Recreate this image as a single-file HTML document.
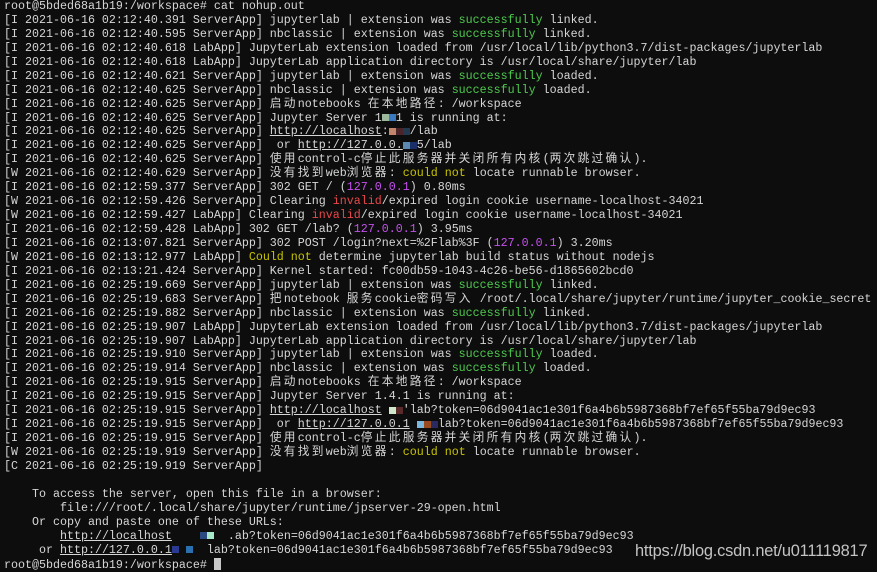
<!DOCTYPE html>
<html><head><meta charset="utf-8"><style>
html,body{margin:0;padding:0;background:#0d0d0d;width:877px;height:572px;overflow:hidden}
pre{margin:0;position:absolute;left:4px;top:0;font-family:"Liberation Mono","Noto Sans CJK SC",monospace;font-size:11.67px;line-height:13.93px;color:#d6d6d6;white-space:pre}
.g{color:#4ec94e}.y{color:#c8c400}.r{color:#e8474a}.m{color:#c451ee}
.u{text-decoration:underline}
.c{font-family:"Noto Sans CJK SC",sans-serif;letter-spacing:2.33px;line-height:0}
.b{display:inline-block;width:7px;height:7px;vertical-align:middle;line-height:0}
.cur{display:inline-block;width:7px;height:12px;background:#c8c8c8;vertical-align:-2px;line-height:0}
.wm{position:absolute;left:635px;top:542px;font-family:"Liberation Sans",sans-serif;font-size:16.4px;color:#c4c4c4;letter-spacing:-0.2px}
</style></head><body><pre>root@5bded68a1b19:/workspace# cat nohup.out
[I 2021-06-16 02:12:40.391 ServerApp] jupyterlab | extension was <span class="g">successfully</span> linked.
[I 2021-06-16 02:12:40.595 ServerApp] nbclassic | extension was <span class="g">successfully</span> linked.
[I 2021-06-16 02:12:40.618 LabApp] JupyterLab extension loaded from /usr/local/lib/python3.7/dist-packages/jupyterlab
[I 2021-06-16 02:12:40.618 LabApp] JupyterLab application directory is /usr/local/share/jupyter/lab
[I 2021-06-16 02:12:40.621 ServerApp] jupyterlab | extension was <span class="g">successfully</span> loaded.
[I 2021-06-16 02:12:40.625 ServerApp] nbclassic | extension was <span class="g">successfully</span> loaded.
[I 2021-06-16 02:12:40.625 ServerApp] <span class="c">启动</span>notebooks <span class="c">在本地路径</span>: /workspace
[I 2021-06-16 02:12:40.625 ServerApp] Jupyter Server 1<span class="b" style="background:#9bb89a"></span><span class="b" style="background:#3a78c0"></span>1 is running at:
[I 2021-06-16 02:12:40.625 ServerApp] <span class="u">http://localhost</span>:<span class="b" style="background:#c4866a"></span><span class="b" style="background:#4a2428"></span><span class="b" style="background:#23394f"></span>/lab
[I 2021-06-16 02:12:40.625 ServerApp]  or <span class="u">http://127.0.0.</span><span class="b" style="background:#5a8ab0"></span><span class="b" style="background:#1a2f6a"></span>5/lab
[I 2021-06-16 02:12:40.625 ServerApp] <span class="c">使用</span>control-c<span class="c">停止此服务器并关闭所有内核</span>(<span class="c">两次跳过确认</span>).
[W 2021-06-16 02:12:40.629 ServerApp] <span class="c">没有找到</span>web<span class="c">浏览器</span>: <span class="y">could not</span> locate runnable browser.
[I 2021-06-16 02:12:59.377 ServerApp] 302 GET / (<span class="m">127.0.0.1</span>) 0.80ms
[W 2021-06-16 02:12:59.426 ServerApp] Clearing <span class="r">invalid</span>/expired login cookie username-localhost-34021
[W 2021-06-16 02:12:59.427 LabApp] Clearing <span class="r">invalid</span>/expired login cookie username-localhost-34021
[I 2021-06-16 02:12:59.428 LabApp] 302 GET /lab? (<span class="m">127.0.0.1</span>) 3.95ms
[I 2021-06-16 02:13:07.821 ServerApp] 302 POST /login?next=%2Flab%3F (<span class="m">127.0.0.1</span>) 3.20ms
[W 2021-06-16 02:13:12.977 LabApp] <span class="y">Could not</span> determine jupyterlab build status without nodejs
[I 2021-06-16 02:13:21.424 ServerApp] Kernel started: fc00db59-1043-4c26-be56-d1865602bcd0
[I 2021-06-16 02:25:19.669 ServerApp] jupyterlab | extension was <span class="g">successfully</span> linked.
[I 2021-06-16 02:25:19.683 ServerApp] <span class="c">把</span>notebook <span class="c">服务</span>cookie<span class="c">密码写入</span> /root/.local/share/jupyter/runtime/jupyter_cookie_secret
[I 2021-06-16 02:25:19.882 ServerApp] nbclassic | extension was <span class="g">successfully</span> linked.
[I 2021-06-16 02:25:19.907 LabApp] JupyterLab extension loaded from /usr/local/lib/python3.7/dist-packages/jupyterlab
[I 2021-06-16 02:25:19.907 LabApp] JupyterLab application directory is /usr/local/share/jupyter/lab
[I 2021-06-16 02:25:19.910 ServerApp] jupyterlab | extension was <span class="g">successfully</span> loaded.
[I 2021-06-16 02:25:19.914 ServerApp] nbclassic | extension was <span class="g">successfully</span> loaded.
[I 2021-06-16 02:25:19.915 ServerApp] <span class="c">启动</span>notebooks <span class="c">在本地路径</span>: /workspace
[I 2021-06-16 02:25:19.915 ServerApp] Jupyter Server 1.4.1 is running at:
[I 2021-06-16 02:25:19.915 ServerApp] <span class="u">http://localhost</span> <span class="b" style="background:#cfe8cc"></span><span class="b" style="background:#5a2a2a"></span>'lab?token=06d9041ac1e301f6a4b6b5987368bf7ef65f55ba79d9ec93
[I 2021-06-16 02:25:19.915 ServerApp]  or <span class="u">http://127.0.0.1</span> <span class="b" style="background:#7ab8e0"></span><span class="b" style="background:#9a4a20"></span><span class="b" style="background:#2a2a60"></span>lab?token=06d9041ac1e301f6a4b6b5987368bf7ef65f55ba79d9ec93
[I 2021-06-16 02:25:19.915 ServerApp] <span class="c">使用</span>control-c<span class="c">停止此服务器并关闭所有内核</span>(<span class="c">两次跳过确认</span>).
[W 2021-06-16 02:25:19.919 ServerApp] <span class="c">没有找到</span>web<span class="c">浏览器</span>: <span class="y">could not</span> locate runnable browser.
[C 2021-06-16 02:25:19.919 ServerApp]

    To access the server, open this file in a browser:
        file:///root/.local/share/jupyter/runtime/jpserver-29-open.html
    Or copy and paste one of these URLs:
        <span class="u">http://localhost</span>    <span class="b" style="background:#2a4a80"></span><span class="b" style="background:#a8e8c8"></span>  .ab?token=06d9041ac1e301f6a4b6b5987368bf7ef65f55ba79d9ec93
     or <span class="u">http://127.0.0.1</span><span class="b" style="background:#2a3a90"></span> <span class="b" style="background:#2a70b0"></span>  lab?token=06d9041ac1e301f6a4b6b5987368bf7ef65f55ba79d9ec93
root@5bded68a1b19:/workspace# <span class="cur"></span></pre>
<div class="wm">https://blog.csdn.net/u011119817</div>
</body></html>
